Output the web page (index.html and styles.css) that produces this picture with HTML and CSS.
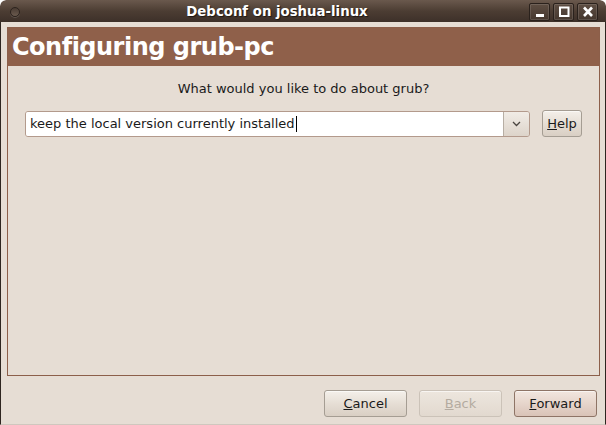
FILE: index.html
```html
<!DOCTYPE html>
<html>
<head>
<meta charset="utf-8">
<link rel="stylesheet" href="styles.css">
</head>
<body>
<div class="window">
  <div class="titlebar">
    <span class="menu-dot"></span>
    <span class="title">Debconf on joshua-linux</span>
    <div class="wm-buttons">
      <span class="wm-btn"><svg width="12" height="12" viewBox="0 0 12 12"><rect x="2" y="8" width="8" height="3" fill="#fff"/></svg></span>
      <span class="wm-btn"><svg width="12" height="12" viewBox="0 0 12 12"><rect x="2" y="1.5" width="8.5" height="8.5" fill="none" stroke="#fff" stroke-width="2"/></svg></span>
      <span class="wm-btn"><svg width="12" height="12" viewBox="0 0 12 12"><path d="M2 1.5 L10 10 M10 1.5 L2 10" stroke="#fff" stroke-width="2.6"/></svg></span>
    </div>
  </div>
  <div class="client">
    <div class="frame">
      <div class="header"><h1>Configuring grub-pc</h1></div>
      <div class="body">
        <p class="question">What would you like to do about grub?</p>
        <div class="row">
          <div class="combo">
            <div class="entry"><span>keep the local version currently installed</span><span class="caret"></span></div>
            <div class="drop"><svg width="9" height="6" viewBox="0 0 9 6"><path d="M1 1 L4.5 4.5 L8 1" fill="none" stroke="#4a4540" stroke-width="1.3"/></svg></div>
          </div>
          <button class="btn help"><u>H</u>elp</button>
        </div>
      </div>
    </div>
    <div class="actions">
      <button class="btn action"><u>C</u>ancel</button>
      <button class="btn action disabled"><u>B</u>ack</button>
      <button class="btn action default"><u>F</u>orward</button>
    </div>
  </div>
</div>
</body>
</html>
```
FILE: styles.css
```css
html, body {
  margin: 0;
  padding: 0;
  background: #ffffff;
}
.window {
  width: 606px;
  height: 425px;
  display: flex;
  flex-direction: column;
  font-family: "DejaVu Sans", sans-serif;
  font-size: 13px;
  color: #1a1a1a;
  overflow: hidden;
  border-radius: 6px 6px 0 0;
}
.titlebar {
  height: 22px;
  flex: none;
  background: linear-gradient(#6a594d, #4c3d33 50%, #3d3029);
  position: relative;
  display: flex;
  align-items: center;
  justify-content: center;
  border-radius: 6px 6px 0 0;
}
.menu-dot {
  position: absolute;
  left: 10px;
  top: 7px;
  width: 8px;
  height: 8px;
  border-radius: 50%;
  border: 1px solid #2c231e;
  background: linear-gradient(#4a3c33, #6a5a4e);
  box-shadow: 0 1px 0 rgba(255,255,255,0.15);
}
.title {
  color: #ffffff;
  font-weight: bold;
  font-size: 13.3px;
  text-shadow: 1px 1px 1px #1e1712;
  margin-left: -52px;
}
.wm-buttons {
  position: absolute;
  right: 8px;
  top: 3px;
  display: flex;
  gap: 3px;
}
.wm-btn {
  width: 19px;
  height: 16px;
  border: 1px solid #2a211c;
  border-radius: 2px;
  background: linear-gradient(#5e4e43, #45372e);
  box-shadow: inset 0 0 0 1px rgba(255,255,255,0.12);
  display: flex;
  align-items: center;
  justify-content: center;
}
.client {
  flex: 1;
  background: #e6ddd4;
  border-left: 1px solid #2e2520;
  border-right: 1px solid #2e2520;
  border-bottom: 1px solid #cfc7be;
  padding: 5px 5px 0 6px;
  display: flex;
  flex-direction: column;
}
.frame {
  height: 349px;
  box-sizing: border-box;
  border: 1px solid #8c5f4a;
  display: flex;
  flex-direction: column;
}
.header {
  height: 38px;
  background: #8f604a;
  display: flex;
  align-items: center;
  padding-left: 4px;
}
.header h1 {
  margin: 0;
  color: #ffffff;
  font-size: 24px;
  font-weight: bold;
  letter-spacing: -0.5px;
}
.body {
  padding: 15px 17px 0 17px;
}
.question {
  margin: 0 0 13px 0;
  text-align: center;
  line-height: 16px;
}
.row {
  display: flex;
  align-items: center;
  gap: 12px;
}
.combo {
  flex: 1;
  height: 24px;
  display: flex;
  border: 1px solid #b39a8c;
  border-radius: 3px;
  overflow: hidden;
}
.entry {
  flex: 1;
  background: #ffffff;
  display: flex;
  align-items: center;
  padding-left: 4px;
  border-right: 1px solid #b7aea4;
}
.caret {
  width: 1px;
  height: 16px;
  background: #000;
  margin-left: 1px;
}
.drop {
  width: 25px;
  background: linear-gradient(#f1ece6, #ddd4ca);
  display: flex;
  align-items: center;
  justify-content: center;
}
.btn {
  font-family: "DejaVu Sans", sans-serif;
  font-size: 13px;
  color: #1a1a1a;
  border: 1px solid #a59d93;
  border-radius: 3px;
  background: linear-gradient(#f4f0ea, #e6ded5 50%, #d9cfc4);
  box-shadow: inset 0 1px 0 rgba(255,255,255,0.6);
  padding: 0;
  height: 27px;
}
.help {
  width: 40px;
}
.actions {
  display: flex;
  justify-content: flex-end;
  gap: 12px;
  padding: 14px 3px 0 0;
}
.action {
  width: 83px;
}
.disabled {
  color: #b4aba0;
  border-color: #cbc2b8;
  background: linear-gradient(#ede6de, #e2d9cf);
}
.default {
  border-color: #8e7466;
  background: linear-gradient(#f2e6df, #e6d5cb 50%, #d9c3b7);
}
```
